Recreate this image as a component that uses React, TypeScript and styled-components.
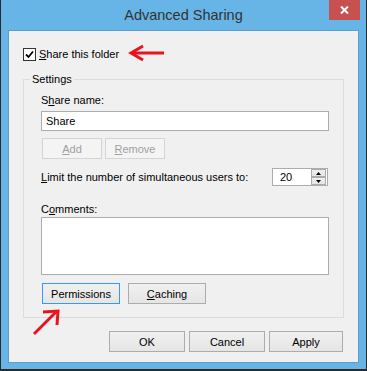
import React from "react";
import styled, { createGlobalStyle, css } from "styled-components";

const GlobalStyle = createGlobalStyle`
    html, body {
        margin: 0;
        padding: 0;
        background: #ffffff;
    }
    * {
        box-sizing: border-box;
    }
`;

const FONT = `"Liberation Sans", Arial, sans-serif`;

const Window = styled.div`
    position: relative;
    width: 367px;
    height: 371px;
    display: flex;
    flex-direction: column;
    background: #67b5e6;
    border-left: 1px solid #2a2a2a;
    border-right: 1px solid #2a2a2a;
    border-bottom: 2px solid #2a2a2a;
    padding: 0 7px 6px 7px;
    font-family: ${FONT};
    font-size: 11px;
    color: #000;
`;

const TitleBar = styled.div`
    height: 30px;
    flex-shrink: 0;
    display: grid;
    grid-template-columns: 1fr auto 1fr;
    align-items: start;
`;

const Title = styled.div`
    grid-column: 2;
    font-size: 14.5px;
    line-height: 30px;
    color: #333333;
`;

const CloseButton = styled.div`
    grid-column: 3;
    justify-self: end;
    margin-right: -1px;
    width: 31px;
    height: 20px;
    background: #c75050;
    display: flex;
    align-items: center;
    justify-content: center;
`;

const Client = styled.div`
    flex: 1;
    background: #f0f0f0;
    border: 1px solid #5b9fcf;
    padding: 0 14px;
    display: flex;
    flex-direction: column;
`;

const CheckRow = styled.label`
    display: flex;
    align-items: center;
    gap: 3px;
    height: 16px;
    margin-top: 15px;
    line-height: 16px;
`;

const CheckBox = styled.span`
    width: 13px;
    height: 13px;
    border: 1px solid #333333;
    background: #ffffff;
    display: flex;
    align-items: center;
    justify-content: center;
`;

const Group = styled.fieldset`
    margin: 10px 0 0 0;
    padding: 6px 14px 13px 17px;
    border: 1px solid #dcdcdc;
    min-width: 0;
`;

const Legend = styled.legend`
    margin-left: -11px;
    padding: 0 2px;
    line-height: 15px;
`;

const FieldLabel = styled.div<{ $top?: number }>`
    line-height: 15px;
    margin-top: ${({ $top }) => $top ?? 0}px;
`;

const TextBox = styled.div`
    margin-top: 3px;
    height: 20px;
    background: #ffffff;
    border: 1px solid #abadb3;
    padding-left: 4px;
    line-height: 18px;
`;

const TextArea = styled.div`
    height: 58px;
    background: #ffffff;
    border: 1px solid #abadb3;
`;

const ButtonRow = styled.div<{ $top: number; $gap: number; $end?: boolean }>`
    display: flex;
    gap: ${({ $gap }) => $gap}px;
    margin-top: ${({ $top }) => $top}px;
    padding-left: ${({ $end }) => ($end ? 0 : 1)}px;
    padding-right: ${({ $end }) => ($end ? 1 : 0)}px;
    justify-content: ${({ $end }) => ($end ? "flex-end" : "flex-start")};
`;

const Button = styled.div<{ $width: number; $disabled?: boolean; $default?: boolean }>`
    width: ${({ $width }) => $width}px;
    height: 21px;
    display: flex;
    align-items: center;
    justify-content: center;
    background: linear-gradient(#f0f0f0, #e5e5e5);
    border: 1px solid #acacac;
    color: #000000;

    ${({ $disabled }) =>
        $disabled &&
        css`
            background: #f4f4f4;
            border-color: #d5d5d5;
            color: #a0a0a0;
        `}

    ${({ $default }) =>
        $default &&
        css`
            border-color: #3399ff;
        `}
`;

const LimitRow = styled.div`
    margin-top: 9px;
    display: flex;
    align-items: center;
    justify-content: space-between;
    padding-right: 1px;
`;

const Spinner = styled.div`
    width: 56px;
    height: 18px;
    background: #ffffff;
    border: 1px solid #abadb3;
    display: flex;
    align-items: center;
    justify-content: space-between;
    padding: 0 1px 0 7px;
`;

const SpinButtons = styled.div`
    display: flex;
    flex-direction: column;
    width: 15px;
`;

const SpinButton = styled.div`
    height: 8px;
    display: flex;
    align-items: center;
    justify-content: center;
    background: linear-gradient(#f0f0f0, #e5e5e5);
    border: 1px solid #acacac;
`;

const Overlay = styled.svg`
    position: absolute;
    left: 0;
    top: 0;
    pointer-events: none;
`;

const Tri = ({ up }: { up?: boolean }) => (
    <svg width="5" height="3" viewBox="0 0 5 3">
        <path d={up ? "M0 3 L2.5 0 L5 3 Z" : "M0 0 L2.5 3 L5 0 Z"} fill="#000" />
    </svg>
);

export default function App() {
    return (
        <>
            <GlobalStyle />
            <Window>
                <TitleBar>
                    <Title>Advanced Sharing</Title>
                    <CloseButton>
                        <svg width="9" height="8" viewBox="0 0 9 8">
                            <path d="M1 0.5 L8 7.5 M8 0.5 L1 7.5" stroke="#fff" strokeWidth="2" />
                        </svg>
                    </CloseButton>
                </TitleBar>
                <Client>
                    <CheckRow>
                        <CheckBox>
                            <svg width="9" height="9" viewBox="0 0 9 9">
                                <path d="M1 4.5 L3.5 7 L8 1.5" stroke="#000" strokeWidth="1.8" fill="none" />
                            </svg>
                        </CheckBox>
                        <span>
                            <u>S</u>hare this folder
                        </span>
                    </CheckRow>
                    <Group>
                        <Legend>Settings</Legend>
                        <FieldLabel>
                            S<u>h</u>are name:
                        </FieldLabel>
                        <TextBox>Share</TextBox>
                        <ButtonRow $top={7} $gap={3}>
                            <Button $width={60} $disabled>
                                <span>
                                    <u>A</u>dd
                                </span>
                            </Button>
                            <Button $width={60} $disabled>
                                <span>
                                    <u>R</u>emove
                                </span>
                            </Button>
                        </ButtonRow>
                        <LimitRow>
                            <span>
                                <u>L</u>imit the number of simultaneous users to:
                            </span>
                            <Spinner>
                                <span>20</span>
                                <SpinButtons>
                                    <SpinButton>
                                        <Tri up />
                                    </SpinButton>
                                    <SpinButton>
                                        <Tri />
                                    </SpinButton>
                                </SpinButtons>
                            </Spinner>
                        </LimitRow>
                        <FieldLabel $top={16}>
                            C<u>o</u>mments:
                        </FieldLabel>
                        <TextArea />
                        <ButtonRow $top={8} $gap={8}>
                            <Button $width={78} $default>
                                Permissions
                            </Button>
                            <Button $width={78}>
                                <span>
                                    <u>C</u>aching
                                </span>
                            </Button>
                        </ButtonRow>
                    </Group>
                    <ButtonRow $top={13} $gap={4} $end>
                        <Button $width={76}>OK</Button>
                        <Button $width={76}>Cancel</Button>
                        <Button $width={74}>Apply</Button>
                    </ButtonRow>
                </Client>
                <Overlay width="367" height="371" viewBox="0 0 367 371">
                    {/* annotation arrows */}
                    <path d="M163 53 L131 53" stroke="#e8141b" strokeWidth="3" />
                    <path d="M142 46 L130 53 L142 60" stroke="#e8141b" strokeWidth="3" fill="none" />
                    <path d="M33 334 L56 311" stroke="#e8141b" strokeWidth="3" />
                    <path d="M42 312 L57 311 L56 325" stroke="#e8141b" strokeWidth="3" fill="none" />
                </Overlay>
            </Window>
        </>
    );
}
